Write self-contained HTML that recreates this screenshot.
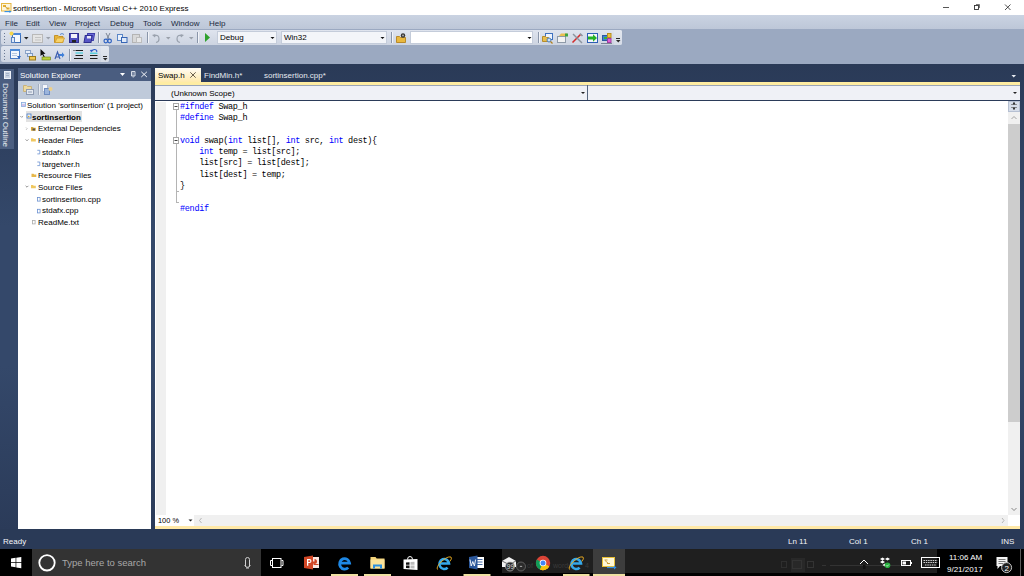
<!DOCTYPE html>
<html><head><meta charset="utf-8">
<style>
*{margin:0;padding:0;box-sizing:border-box}
html,body{width:1024px;height:576px;overflow:hidden;background:#2b3b59;font-family:"Liberation Sans",sans-serif;font-size:8px;line-height:10px;color:#000}
.a{position:absolute;white-space:nowrap}
#ov{position:absolute;left:0;top:0;overflow:visible}
.tb{position:absolute;background:linear-gradient(#dfe4ee,#cdd4e1)}
.mi{position:absolute;color:#1b2a40;top:18.6px}
.combo{position:absolute;background:#f3f5f9;border:1px solid #c4ccda}
.st{position:absolute;color:#f4f6fa;top:537px}
.tree{position:absolute;left:18px;top:100px;width:133px;line-height:11.7px;white-space:pre}
.code{position:absolute;left:180px;top:101.5px;font-family:"Liberation Mono",monospace;font-size:8.5px;letter-spacing:-0.3px;line-height:11.35px;white-space:pre;color:#000}
.k{color:#0000ff}
</style></head><body>
<!-- title bar -->
<div class="a" style="left:0;top:0;width:1024px;height:15px;background:#fff"></div>
<div class="a" style="left:13px;top:4px;color:#000">sortinsertion - Microsoft Visual C++ 2010 Express</div>
<!-- menu -->
<div class="a" style="left:0;top:15px;width:1024px;height:14px;background:linear-gradient(#cad3e2,#bdc7d8)"></div>
<div class="mi" style="left:5px">File</div>
<div class="mi" style="left:26px">Edit</div>
<div class="mi" style="left:49px">View</div>
<div class="mi" style="left:75px">Project</div>
<div class="mi" style="left:110px">Debug</div>
<div class="mi" style="left:143px">Tools</div>
<div class="mi" style="left:171px">Window</div>
<div class="mi" style="left:209px">Help</div>
<!-- shelf -->
<div class="a" style="left:0;top:29px;width:1024px;height:35px;background:#9ba9c1"></div>
<div class="tb" style="left:1px;top:30px;width:621px;height:15px;border-radius:2px"></div>
<div class="a" style="left:614px;top:30px;width:8px;height:15px;background:linear-gradient(#e3e7ef,#d6dce7);border-radius:0 2px 2px 0"></div>
<div class="tb" style="left:1px;top:46px;width:108px;height:16px;border-radius:2px"></div>
<div class="a" style="left:101px;top:46px;width:8px;height:16px;background:linear-gradient(#e3e7ef,#d6dce7);border-radius:0 2px 2px 0"></div>
<div class="combo" style="left:217px;top:31px;width:60px;height:13px"></div>
<div class="a" style="left:220px;top:33px">Debug</div>
<div class="combo" style="left:281px;top:31px;width:106px;height:13px"></div>
<div class="a" style="left:284px;top:33px">Win32</div>
<div class="combo" style="left:410px;top:31px;width:123px;height:13px;background:#fff"></div>

<div class="a" style="left:0;top:64px;width:1024px;height:465px;background:linear-gradient(#2a3a57 0%,#34486a 35%,#34486a 65%,#2b3b59 100%)"></div>
<div class="a" style="left:0;top:529px;width:1024px;height:20px;background:#2a3a57"></div>
<!-- left tab -->
<div class="a" style="left:0;top:69px;width:14px;height:80px;background:#4b5e80"></div>
<div class="a" style="left:10px;top:83px;transform:rotate(90deg);transform-origin:0 0;color:#e8ecf2">Document Outline</div>

<!-- solution explorer -->
<div class="a" style="left:18px;top:68px;width:133px;height:13px;background:#4a5d80"></div>
<div class="a" style="left:20px;top:71px;color:#fff">Solution Explorer</div>
<div class="a" style="left:18px;top:81px;width:133px;height:18px;background:#bfcada"></div>
<div class="a" style="left:18px;top:99px;width:133px;height:430px;background:#fff"></div>
<div class="a" style="left:26px;top:111px;width:56px;height:11px;background:#e2e2e2"></div>
<div class="tree"><span style="padding-left:9px">Solution 'sortinsertion' (1 project)</span>
<b style="padding-left:14px">sortinsertion</b>
<span style="padding-left:20px">External Dependencies</span>
<span style="padding-left:20px">Header Files</span>
<span style="padding-left:24px">stdafx.h</span>
<span style="padding-left:24px">targetver.h</span>
<span style="padding-left:20px">Resource Files</span>
<span style="padding-left:20px">Source Files</span>
<span style="padding-left:24px">sortinsertion.cpp</span>
<span style="padding-left:24px">stdafx.cpp</span>
<span style="padding-left:20px">ReadMe.txt</span></div>

<!-- editor tabs -->
<div class="a" style="left:155px;top:68px;width:46px;height:15px;background:linear-gradient(#fffcf4,#ffe8a6)"></div>
<div class="a" style="left:158px;top:71px">Swap.h</div>
<div class="a" style="left:204px;top:71px;color:#e6eaf0">FindMin.h*</div>
<div class="a" style="left:264px;top:71px;color:#e6eaf0">sortinsertion.cpp*</div>
<div class="a" style="left:155px;top:82px;width:865px;height:3px;background:#ffeda2"></div>
<div class="a" style="left:155px;top:85px;width:865px;height:1px;background:#9ba6b8"></div>
<div class="a" style="left:155px;top:86px;width:865px;height:14px;background:#eff1f6"></div>
<div class="a" style="left:587px;top:85px;width:1px;height:15px;background:#56667e"></div>
<div class="a" style="left:171px;top:89px">(Unknown Scope)</div>
<div class="a" style="left:155px;top:100px;width:865px;height:1px;background:#2b3b59"></div>
<!-- editor body -->
<div class="a" style="left:155px;top:101px;width:853px;height:414px;background:#fff"></div>
<div class="a" style="left:156px;top:102px;width:10px;height:413px;background:#f0f0f0"></div>
<div class="code"><span class="k">#ifndef</span> Swap_h
<span class="k">#define</span> Swap_h

<span class="k">void</span> swap(<span class="k">int</span> list[], <span class="k">int</span> src, <span class="k">int</span> dest){
    <span class="k">int</span> temp = list[src];
    list[src] = list[dest];
    list[dest] = temp;
}

<span class="k">#endif</span></div>
<!-- v scrollbar -->
<div class="a" style="left:1008px;top:101px;width:12px;height:414px;background:#f0f0f0"></div>
<div class="a" style="left:1008px;top:124px;width:12px;height:298px;background:#cdcdcd"></div>
<div class="a" style="left:1008px;top:101px;width:12px;height:11px;background:#d6dde9;border:1px solid #b6c0d2"></div>
<!-- h bar -->
<div class="a" style="left:155px;top:515px;width:853px;height:11px;background:#f0f0f0"></div>
<div class="a" style="left:155px;top:515px;width:39px;height:11px;background:#fff"></div>
<div class="a" style="left:158px;top:516px;font-size:7.4px">100 %</div>
<div class="a" style="left:1008px;top:515px;width:12px;height:11px;background:#fff"></div>
<div class="a" style="left:155px;top:526px;width:865px;height:3px;background:#ffe8a6"></div>

<!-- status -->
<div class="st" style="left:3px">Ready</div>
<div class="st" style="left:788px">Ln 11</div>
<div class="st" style="left:849px">Col 1</div>
<div class="st" style="left:911px">Ch 1</div>
<div class="st" style="left:1001px">INS</div>

<!-- taskbar -->
<div class="a" style="left:0;top:549px;width:1024px;height:27px;background:#000"></div>
<div class="a" style="left:32px;top:549px;width:229px;height:27px;background:#333"></div>
<div class="a" style="left:502px;top:549px;width:435px;height:24px;background:#1f1f1f"></div>
<div class="a" style="left:593px;top:549px;width:32px;height:27px;background:#3d3d3d"></div>
<div class="a" style="left:62px;top:557px;font-size:9.5px;line-height:12px;color:#a8a8a8">Type here to search</div>
<div class="a" style="left:949px;top:553px;color:#fff">11:06 AM</div>
<div class="a" style="left:947px;top:565px;color:#fff">9/21/2017</div>

<!--OVERLAY-->
<svg id="ov" width="1024" height="576" viewBox="0 0 1024 576" shape-rendering="auto">
<!-- title icon -->
<rect x="1.5" y="3.5" width="9.5" height="7.5" fill="#fdf6dc" stroke="#e6b844"/>
<rect x="3" y="5" width="3" height="2" fill="#e8b030"/>
<rect x="6.5" y="7.5" width="3" height="2" fill="#e8b030"/>
<path d="M5 6.5 l2.5 2" stroke="#a88838" stroke-width="0.7"/>
<path d="M4.5 11.6 h6" stroke="#2f8ee6" stroke-width="1.1"/>
<path d="M9.5 10.2 l2 1.4 l-2 1.4z" fill="#2f8ee6"/>
<!-- window controls -->
<path d="M943 7.5 h6" stroke="#444" stroke-width="0.9"/>
<rect x="974.5" y="5.5" width="4" height="4" fill="none" stroke="#333" stroke-width="0.9"/>
<path d="M976 4.5 h3.5 v3.5" stroke="#555" fill="none" stroke-width="0.8"/>
<path d="M1005 4.5 l5.5 5.5 M1010.5 4.5 l-5.5 5.5" stroke="#222" stroke-width="0.8"/>
<!-- toolbar1 grip -->
<g fill="#6b7a93"><rect x="4" y="33" width="1" height="1"/><rect x="4" y="36" width="1" height="1"/><rect x="4" y="39" width="1" height="1"/><rect x="4" y="42" width="1" height="1"/></g>
<g fill="#6b7a93"><rect x="4" y="50" width="1" height="1"/><rect x="4" y="53" width="1" height="1"/><rect x="4" y="56" width="1" height="1"/><rect x="4" y="59" width="1" height="1"/></g>
<!-- new project -->
<rect x="12.5" y="33.5" width="8" height="9" fill="#f4f8fd" stroke="#3d6fb8"/>
<rect x="12" y="33" width="9" height="2" fill="#4a86d8"/>
<rect x="11.5" y="37.5" width="3" height="5" fill="#dfeafb" stroke="#5a84c0"/>
<circle cx="11.5" cy="33.5" r="2" fill="#f6d64a"/>
<path d="M24 37 h4.5 l-2.25 2.5z" fill="#222"/>
<!-- add item disabled -->
<rect x="32.5" y="34.5" width="10" height="8" fill="#e4e4e4" stroke="#b9b9b9"/>
<path d="M35 37.5 h6 M35 40 h6" stroke="#c3c3c3"/>
<path d="M46 37 h4.5 l-2.25 2.5z" fill="#9aa0aa"/>
<!-- open folder -->
<path d="M54.5 35.5 h3.5 l1 1 h4 v6 h-8.5z" fill="#e7b53b" stroke="#c4922a"/>
<path d="M55 42.5 l2 -4.5 h7.5 l-2 4.5z" fill="#f7d36b" stroke="#d29e2e" stroke-width="0.8"/>
<path d="M60 34.5 q2 -2 4 0" stroke="#4c7fca" fill="none" stroke-width="0.9"/>
<!-- save -->
<rect x="69.5" y="33.5" width="9" height="9" fill="#4f4fc0" stroke="#2f2f8f"/>
<rect x="71" y="34" width="6" height="4" fill="#f2f2fa"/>
<rect x="72" y="40" width="4" height="2.5" fill="#222"/>
<!-- save all -->
<rect x="86.5" y="33.5" width="7" height="7" fill="#6a6ad8" stroke="#3d3da8" transform="skewX(-10) translate(7 0)"/>
<rect x="84.5" y="35.5" width="7" height="7" fill="#5656c6" stroke="#2f2f8f" transform="skewX(-10) translate(7 0)"/>
<rect x="87" y="36" width="4" height="2.5" fill="#e8e8f8"/>
<!-- sep -->
<path d="M98.5 32 v11" stroke="#8a96aa"/><path d="M99.5 32 v11" stroke="#f2f4f8"/>
<!-- cut -->
<path d="M106 33 l3 6 M110 33 l-3 6" stroke="#7b8595" stroke-width="1"/>
<circle cx="105.8" cy="41" r="1.8" fill="none" stroke="#2e62c2" stroke-width="1.2"/>
<circle cx="109.6" cy="41" r="1.8" fill="none" stroke="#2e62c2" stroke-width="1.2"/>
<!-- copy -->
<rect x="117.5" y="34.5" width="5" height="6" fill="#eaf1fb" stroke="#5b86c7"/>
<rect x="121.5" y="37.5" width="5.5" height="5" fill="#dfe9f8" stroke="#3766b5"/>
<!-- paste disabled -->
<rect x="132.5" y="34.5" width="7" height="8" fill="#d8d8d8" stroke="#b4b4b4"/>
<rect x="136.5" y="37.5" width="5" height="5" fill="#e8e8e8" stroke="#bdbdbd"/>
<path d="M147.5 32 v11" stroke="#8a96aa"/><path d="M148.5 32 v11" stroke="#f2f4f8"/>
<!-- undo -->
<path d="M154 36 q5 -2 5 3 q0 3 -3 3.5" stroke="#9aa2ae" fill="none" stroke-width="1.2"/>
<path d="M152 35 l3.5 -1 l-0.5 3.5z" fill="#9aa2ae"/>
<path d="M166 37 h4.5 l-2.25 2.5z" fill="#9aa0aa"/>
<!-- redo -->
<path d="M182 36 q-5 -2 -5 3 q0 3 3 3.5" stroke="#9aa2ae" fill="none" stroke-width="1.2"/>
<path d="M184 35 l-3.5 -1 l0.5 3.5z" fill="#9aa2ae"/>
<path d="M189 37 h4.5 l-2.25 2.5z" fill="#9aa0aa"/>
<path d="M197.5 32 v11" stroke="#8a96aa"/><path d="M198.5 32 v11" stroke="#f2f4f8"/>
<!-- play -->
<path d="M205 33 l5 4.5 l-5 4.5z" fill="#2ea12e"/>
<!-- combo arrows -->
<path d="M270.5 37 h4 l-2 2z" fill="#111"/>
<path d="M380.5 37 h4 l-2 2z" fill="#111"/>
<path d="M527.5 37 h4 l-2 2z" fill="#111"/>
<path d="M391.5 32 v11" stroke="#8a96aa"/><path d="M392.5 32 v11" stroke="#f2f4f8"/>
<!-- find in files -->
<path d="M396.5 36.5 h3 l1 1 h5 v5 h-9z" fill="#e9b83e" stroke="#b98a2a"/>
<circle cx="403" cy="35.5" r="2.2" fill="#333"/>
<circle cx="403" cy="35.5" r="1" fill="#aaa"/>
<path d="M538.5 32 v11" stroke="#8a96aa"/><path d="M539.5 32 v11" stroke="#f2f4f8"/>
<!-- icons 542.. -->
<rect x="545.5" y="33.5" width="7" height="6" fill="#eef3fb" stroke="#3f72c0"/>
<path d="M542.5 36.5 h3 l1 1 h2 v4 h-6z" fill="#e9be4c" stroke="#b58c2c"/>
<circle cx="549" cy="40" r="2" fill="#cfe4f6" stroke="#4a7cb8"/>
<path d="M550.5 41.5 l2 2" stroke="#b0801e" stroke-width="1.2"/>
<rect x="557.5" y="36.5" width="8" height="6" fill="#f2f2f2" stroke="#8e9aa8"/>
<path d="M559 36 l2 -2.5 h6 v2.5 z" fill="#e9bf50"/>
<rect x="565" y="33.5" width="3" height="3" fill="#3fa43f"/>
<path d="M572.5 42.5 l8 -8" stroke="#d22b2b" stroke-width="1.6"/>
<path d="M573 34 l9 9" stroke="#8c949e" stroke-width="1.4"/>
<path d="M580 33.5 l2.5 2.5" stroke="#8c949e" stroke-width="1.6"/>
<rect x="587.5" y="33.5" width="10" height="9" fill="#f4f7fc" stroke="#2d5fb5"/>
<path d="M588 36.5 h5 v-2.2 l4 3.7 l-4 3.7 v-2.2 h-5z" fill="#25b325"/>
<rect x="602.5" y="35.5" width="5" height="5" fill="#3b82d6" stroke="#2d5aa0"/>
<rect x="607.5" y="33.5" width="3.5" height="4" fill="#f0c040" stroke="#b88f20"/>
<rect x="607.5" y="38.5" width="3.5" height="4" fill="#e060d8" stroke="#a040a0"/>
<rect x="604" y="37" width="3" height="2" fill="#3cb03c"/>
<path d="M601 43.5 h11" stroke="#7b8595"/>
<!-- overflow t1 -->
<path d="M616 38.5 h4" stroke="#2a2a2a"/>
<path d="M616 40 h4.5 l-2.25 2.5z" fill="#2a2a2a"/>

<!-- toolbar 2 icons -->
<rect x="10.5" y="49.5" width="9" height="9" fill="#f3f7fd" stroke="#4b7cc4"/>
<rect x="10" y="49" width="10" height="2" fill="#4d8ad8"/>
<path d="M12 53.5 h5 M12 55.5 h5" stroke="#b8c8e0"/>
<path d="M17 56 l4 0 l-2 3z" fill="#2e66c0"/>
<rect x="25.5" y="50.5" width="5" height="3" fill="#e8eef8" stroke="#8ca4c8"/>
<rect x="27.5" y="53.5" width="5" height="3" fill="#dde8f6" stroke="#7b98c2"/>
<rect x="29.5" y="56.5" width="6" height="3.5" fill="#f0c850" stroke="#9a7a20"/>
<path d="M40.5 49 v7 l1.8 -1.5 l1.5 3 l1 -0.5 l-1.5 -3 l2.2 -0.2z" fill="#111"/>
<rect x="42" y="57" width="8.5" height="3" fill="#b9d23a" stroke="#6a7d18" stroke-width="0.6"/>
<path d="M55 59 l2.5 -7 l2.5 7 M56 57 h3" stroke="#3a5cae" stroke-width="1.1" fill="none"/>
<path d="M59 54 h3 v-1.8 l2.5 2.8 l-2.5 2.8 v-1.8 h-3z" fill="#3f7fd8"/>
<path d="M69.5 49 v12" stroke="#8a96aa"/><path d="M70.5 49 v12" stroke="#f2f4f8"/>
<path d="M75.5 50.5 h7.5 M75.5 55.5 h7.5 M74 58.5 h9" stroke="#1e1e1e" stroke-width="1"/>
<rect x="73.5" y="50" width="1" height="1" fill="#1e1e1e"/>
<path d="M75.5 53 h7.5" stroke="#22c8d8" stroke-width="1"/>
<path d="M90 55.5 h7.5 M90 58.5 h7.5" stroke="#1e1e1e" stroke-width="1"/>
<path d="M90 53.2 h7.5" stroke="#22c8d8" stroke-width="1"/>
<path d="M91.5 51.5 q1.5 -2.5 4 -1.8 q2 0.8 1 2.3" stroke="#2b58c8" stroke-width="1.1" fill="none"/>
<path d="M89.8 50 l2.6 -0.2 l-1 2.6z" fill="#2b58c8"/>
<path d="M103 56.5 h4" stroke="#2a2a2a"/>
<path d="M103 58 h4.5 l-2.25 2.5z" fill="#2a2a2a"/>
</svg>
<svg id="ov2" style="position:absolute;left:0;top:0" width="1024" height="576" viewBox="0 0 1024 576">
<!-- left tab icon -->
<rect x="4.5" y="71.5" width="6" height="7" fill="#c9d3e2" stroke="#eef2f8"/>
<path d="M6 73.5 h3 M6 75.5 h3" stroke="#a4b2c8"/>
<!-- SE header icons -->
<path d="M120 73 h5 l-2.5 3z" fill="#fff"/>
<path d="M131.5 71.5 h3.5 v4.5 h-3.5z" fill="none" stroke="#e8ecf3" stroke-width="0.9"/>
<path d="M133 71.5 v4.5" stroke="#e8ecf3" stroke-width="0.6"/>
<path d="M133.2 76 v1.8" stroke="#c0c8d6" stroke-width="0.8"/>
<path d="M141.3 71.8 l5.6 5.2 M146.9 71.8 l-5.6 5.2" stroke="#f2f4f8" stroke-width="1"/>
<!-- SE toolbar icons -->
<path d="M23.5 85.5 h3 l1 1 h4 v5 h-8z" fill="#ecd9a0" stroke="#c8b27a"/>
<rect x="26.5" y="89.5" width="7" height="5" fill="#e4e9f0" stroke="#8e9bb2"/>
<path d="M28 92 h4" stroke="#8e9bb2"/>
<path d="M38.5 84 v11" stroke="#a3aec0"/><path d="M39.5 84 v11" stroke="#e6eaf1"/>
<rect x="42.5" y="84.5" width="5" height="7" fill="#f5f7fb" stroke="#b4c0d4"/>
<rect x="44.5" y="88.5" width="5" height="6" fill="#9ab4dc" stroke="#6e8cc0"/>
<circle cx="50.5" cy="89" r="2" fill="#eed08a"/>
<!-- tree icons -->
<rect x="21.5" y="102.5" width="4" height="4" fill="#e4eefb" stroke="#86a8dc" stroke-width="0.8"/>
<path d="M22 105 h3" stroke="#b487d0" stroke-width="0.9"/>
<path d="M20.3 116 l1.4 1.4 l1.4 -1.4" stroke="#8a8a8a" stroke-width="0.8" fill="none"/>
<rect x="27" y="114" width="4" height="4" fill="#e8f0fb" stroke="#4a7ac2" stroke-width="0.8"/>
<path d="M28 115.8 l2 0.8 l-2 0.9z" fill="#e0a820"/>
<path d="M26 127.5 l1.2 1.2 l-1.2 1.2" stroke="#b0b0b0" stroke-width="0.8" fill="none"/>
<path d="M31 127 h2 l0.7 0.7 h2.1 v3.1 h-4.8z" fill="#d8a838"/>
<rect x="32.5" y="128.5" width="2.5" height="2" fill="#555"/>
<path d="M25.6 139.4 l1.4 1.4 l1.4 -1.4" stroke="#777" stroke-width="0.8" fill="none"/>
<path d="M31 138.3 h2 l0.7 0.7 h2.1 v2.6 h-4.8z" fill="#f0c860"/>
<path d="M37.3 150.3 h2.5 v3.6 h-2.5" fill="none" stroke="#6a90d0" stroke-width="0.8"/>
<path d="M37.3 162 h2.5 v3.6 h-2.5" fill="none" stroke="#6a90d0" stroke-width="0.8"/>
<path d="M31.5 173.8 h2 l0.7 0.7 h2.1 v2.6 h-4.8z" fill="#e7b84a"/>
<path d="M25.6 185.8 l1.4 1.4 l1.4 -1.4" stroke="#777" stroke-width="0.8" fill="none"/>
<path d="M31 185 h2 l0.7 0.7 h2.1 v2.6 h-4.8z" fill="#f0c860"/>
<rect x="37.5" y="197.5" width="2.6" height="3.6" fill="none" stroke="#6a90d0" stroke-width="0.8"/>
<rect x="37.5" y="209.3" width="2.6" height="3.6" fill="none" stroke="#6a90d0" stroke-width="0.8"/>
<rect x="32.5" y="220.5" width="2.6" height="3.4" fill="none" stroke="#aaa" stroke-width="0.8"/>
<!-- tab close -->
<path d="M190.3 72.3 l5.4 5.4 M195.7 72.3 l-5.4 5.4" stroke="#5a5040" stroke-width="0.9"/>
<!-- nav arrows -->
<path d="M1011.5 75 h4.5 l-2.25 2.5z" fill="#e8ecf3"/>
<path d="M581 92 h4 l-2 2z" fill="#222"/>
<path d="M1013 92 h4 l-2 2z" fill="#222"/>
<!-- fold markers -->
<path d="M176.5 110 v93 M176 191.5 h3 M176 202.5 h3" stroke="#b4b4b4"/>
<rect x="173.5" y="103.5" width="5" height="6" fill="#fff" stroke="#a8a8a8"/>
<path d="M174.5 106.5 h3" stroke="#444"/>
<rect x="173.5" y="137.5" width="5" height="6" fill="#fff" stroke="#a8a8a8"/>
<path d="M174.5 140.5 h3" stroke="#444"/>
<!-- v scroll -->
<path d="M1011 104.5 h6 M1011 107.5 h6" stroke="#555" stroke-width="0.6"/>
<path d="M1014 102.5 l-1.5 1.8 h3z M1014 109.5 l-1.5 -1.8 h3z" fill="#222"/>
<path d="M1014 102 v2.5 M1014 107.5 v2.5" stroke="#222" stroke-width="0.8"/>
<path d="M1011.5 119 l2.5 -2.5 l2.5 2.5" stroke="#9a9a9a" fill="none" stroke-width="0.9"/>
<path d="M1011.5 508 l2.5 2.5 l2.5 -2.5" stroke="#7a7a7a" fill="none" stroke-width="0.9"/>
<!-- h scroll -->
<path d="M188.5 519.5 h4 l-2 2z" fill="#222"/>
<path d="M201.5 518 l-2 2.5 l2 2.5" stroke="#b0b0b0" fill="none" stroke-width="0.9"/>
<path d="M1002 518 l2 2.5 l-2 2.5" stroke="#b0b0b0" fill="none" stroke-width="0.9"/>

<!-- taskbar -->
<g fill="#fff"><path d="M11 558.5 l4.6 -0.7 v4.4 h-4.6z M16.3 557.7 l5 -0.8 v5.3 h-5z M11 562.9 h4.6 v4.4 l-4.6 -0.7z M16.3 562.9 h5 v5.3 l-5 -0.8z"/></g>
<circle cx="47" cy="562.8" r="7.7" fill="none" stroke="#fff" stroke-width="1.8"/>
<!-- mic -->
<path d="M245.5 566 v-6.5 q0 -2 2 -2 q2 0 2 2 v6.5" fill="none" stroke="#d0d0d0" stroke-width="1"/>
<path d="M244.5 565.5 q3 3.5 6 0 M246 568 h3" stroke="#d0d0d0" fill="none" stroke-width="1"/>
<!-- task view -->
<rect x="272.5" y="558.5" width="8.5" height="9" fill="none" stroke="#fff"/>
<path d="M272 560.5 h-1.5 v5 h1.5 M281.5 560.5 h1.5 v5 h-1.5" stroke="#fff" fill="none"/>
<!-- powerpoint -->
<rect x="311" y="557" width="8" height="11" fill="#fbe9e4"/>
<path d="M314.5 561.5 v-2.5 a2.5 2.5 0 1 1 -2.5 2.5z" fill="#d24726"/>
<path d="M313.5 564.5 h5" stroke="#d24726" stroke-width="1"/>
<path d="M304 557 l9 -1.5 v14 l-9 -1.5z" fill="#d24726"/>
<path d="M307 559 h2.5 q2 0 2 2 q0 2 -2 2 h-1.2 v2.8 h-1.3z" fill="#fff"/>
<path d="M308.3 560.2 h1.1 q0.9 0 0.9 0.8 q0 0.9 -0.9 0.9 h-1.1z" fill="#d24726"/>
<!-- edge -->
<path d="M339.8 563.2 H349.6 A5 5.3 0 1 0 348.2 567.6" stroke="#1e88e5" stroke-width="2.8" fill="none"/>
<path d="M331 575 h27" stroke="#efe0a2" stroke-width="2"/>
<!-- explorer -->
<path d="M370.5 557 h5 l1.2 1.5 h7.8 v10 h-14z" fill="#f3d37a"/>
<path d="M370.5 559.5 h14 v9 h-14z" fill="#fbe39a"/>
<path d="M373 568.5 v-4 h9 v4 h-2 v-2 h-5 v2z" fill="#2a8fe0"/>
<path d="M364 575 h27" stroke="#efe0a2" stroke-width="2"/>
<!-- store -->
<path d="M403.5 559.5 l14 -0.5 v11 l-14 -1z" fill="#fff"/>
<path d="M407.5 559.5 q0 -3 2.5 -3 q2.5 0 2.5 3" stroke="#fff" fill="none" stroke-width="1"/>
<path d="M406 562.5 l3.5 -0.3 v2.6 h-3.5z M406 565.6 h3.5 v2.6 l-3.5 -0.3z" fill="#111"/>
<path d="M410.5 562.1 l4 -0.3 v3 h-4z M410.5 565.6 h4 v3 l-4 -0.3z" fill="#bbb"/>
<!-- IE -->
<g id="ie">
<path d="M439.3 563.5 H449 A4.8 5 0 1 0 447.6 567.6" stroke="#35a8ea" stroke-width="2.6" fill="none"/>
<path d="M437.5 569.5 q-1.5 -2.5 3.5 -7.5 q6 -6 10 -5 q1.5 1.5 -1.2 4.5" stroke="#f0b020" fill="none" stroke-width="0.9"/>
</g>
<!-- word -->
<rect x="474" y="557" width="10" height="11" fill="#fff"/>
<path d="M475.5 559.5 h7 M475.5 562 h7 M475.5 564.5 h7" stroke="#2b579a" stroke-width="0.9"/>
<path d="M469 557 l8.5 -1.5 v14 l-8.5 -1.5z" fill="#2b579a"/>
<path d="M470 559.5 l1.2 6.5 l1.6 -4.5 l1.6 4.5 l1.2 -6.5" stroke="#fff" fill="none" stroke-width="0.9"/>
<path d="M463.5 575 h27" stroke="#efe0a2" stroke-width="2"/>
<!-- mail w badge -->
<path d="M502 561 l7 -4 l7 4 v6 h-14z" fill="#f2f2f2"/>
<path d="M502 561 l7 3.5 l7 -3.5" stroke="#333" fill="none" stroke-width="0.7"/>
<circle cx="510" cy="566.5" r="4.5" fill="#2b2b2b" stroke="#bbb" stroke-width="0.7"/>
<text x="506.8" y="569" font-family="Liberation Sans" font-size="6.5" fill="#ddd">99</text>
<circle cx="521" cy="566.5" r="4.5" fill="#2b2b2b" stroke="#777" stroke-width="0.7"/>
<path d="M519.5 567 l1.5 -1.5 l1.5 1.5z" fill="#aaa"/>
<text x="527" y="567.5" font-family="Liberation Sans" font-size="7" fill="#3a3a3a">of</text>
<!-- chrome -->
<circle cx="543" cy="563" r="7.2" fill="#db4437"/>
<path d="M543 563 L549.2 566.6 A7.2 7.2 0 0 1 540 569.5z" fill="#f4c20d"/>
<path d="M543 563 L540 569.5 A7.2 7.2 0 0 1 536.8 559.4 z" fill="#0f9d58"/>
<path d="M543 563 L549.2 566.6 A7.2 7.2 0 0 1 540 569.5z" fill="#f4c20d"/>
<circle cx="543" cy="563" r="3.3" fill="#fff"/>
<circle cx="543" cy="563" r="2.5" fill="#4285f4"/>
<text x="553" y="567.5" font-family="Liberation Sans" font-size="7" fill="#3a3a3a">words</text>
<use href="#ie" x="132" y="0"/>
<text x="585" y="567.5" font-family="Liberation Sans" font-size="7" fill="#3a3a3a">4</text>
<path d="M563 575 h26.5" stroke="#efe0a2" stroke-width="2"/>
<!-- VS tile icon -->
<rect x="602.5" y="557.5" width="12" height="9" fill="#fff8d8" stroke="#e9bf35"/>
<path d="M604.5 560 h3 M605 560.5 l3.5 3 M607 563.5 h3" stroke="#c89530" stroke-width="0.9"/>
<path d="M607 567.5 h8" stroke="#2f8ee6" stroke-width="1.2"/>
<path d="M614 565.5 l2.5 2 l-2.5 2z" fill="#2f8ee6"/>
<path d="M593 575 h32" stroke="#efe0a2" stroke-width="2"/>
<!-- ghost word status -->
<rect x="781.5" y="561.5" width="5" height="6" fill="none" stroke="#2e2e2e"/>
<rect x="791" y="558" width="14" height="14" fill="#282828"/>
<rect x="792.5" y="560.5" width="9" height="8" fill="none" stroke="#333"/>
<rect x="807.5" y="561.5" width="6" height="6" fill="none" stroke="#333"/>
<path d="M822 565.5 h4 M830 565.5 h70" stroke="#333"/>
<!-- tray -->
<path d="M860 564 l4 -4 l4 4" stroke="#fff" fill="none" stroke-width="1"/>
<rect x="863" y="565" width="2.5" height="4" fill="#111"/>
<path d="M880 559 l2.5 -1.5 l2.5 1.5 l-2.5 1.5z M885 559 l2.5 -1.5 l2.5 1.5 l-2.5 1.5z M880 562 l2.5 -1.5 l2.5 1.5 l-2.5 1.5z M882.5 565 l2.5 -1.5 l2.5 1.5 l-2.5 1.5z" fill="#fff"/>
<circle cx="887.5" cy="565.3" r="2.8" fill="#27b03e"/>
<path d="M886.2 565.4 l0.9 0.9 l1.7 -1.7" stroke="#fff" stroke-width="0.7" fill="none"/>
<rect x="901.5" y="560.5" width="9" height="5" fill="none" stroke="#fff"/>
<rect x="902.5" y="561.5" width="3.5" height="3" fill="#fff"/>
<rect x="911" y="562" width="1" height="2" fill="#fff"/>
<rect x="921.5" y="557.5" width="18" height="10" fill="none" stroke="#fff"/>
<path d="M923.5 560.5 h14 M923.5 562.5 h14 M925 565 h11" stroke="#fff" stroke-width="0.8" stroke-dasharray="1.5 0.8"/>
<!-- notification -->
<path d="M996.5 557 h11 v9 h-7.5 l-2.5 3 v-3 h-1z" fill="#f4f4f4"/>
<path d="M998.5 559.5 h7 M998.5 561.5 h7 M998.5 563.5 h5" stroke="#444" stroke-width="0.7"/>
<circle cx="1006.6" cy="567.6" r="5" fill="#1e1e1e" stroke="#d8d8d8" stroke-width="0.9"/>
<text x="1004.4" y="570.6" font-family="Liberation Sans" font-size="8" fill="#fff">2</text>
<path d="M1020.5 549 v27" stroke="#5a5a5a"/>
</svg>
</body></html>
